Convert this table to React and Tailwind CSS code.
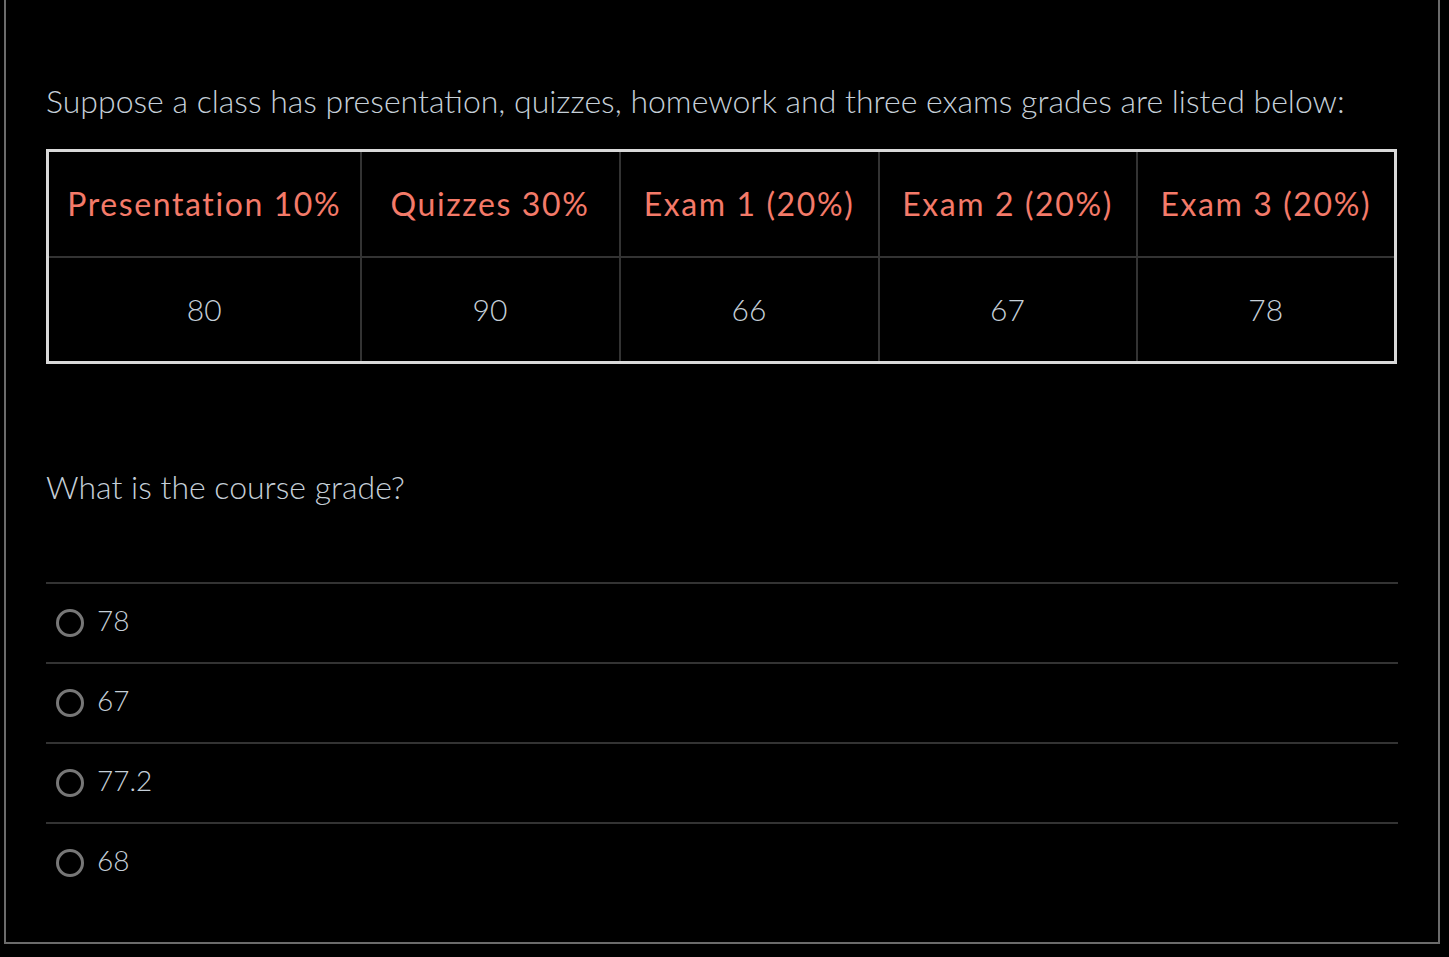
import { useState } from 'react';

const headers = ["Presentation 10%", "Quizzes 30%", "Exam 1 (20%)", "Exam 2 (20%)", "Exam 3 (20%)"];
const scores = ["80", "90", "66", "67", "78"];
const options = ["78", "67", "77.2", "68"];

export default function App() {
  const [picked, setPicked] = useState(null);

  return (
    <div className="min-h-screen bg-black" style={{ fontFamily: "Lato, 'Open Sans', sans-serif" }}>
      <div className="ml-[4px] w-[1436px] h-[944px] border-l-2 border-r-2 border-b-2 border-[#6b6b6b] pl-[40px] pr-[40px] pt-[77px]">
        {/* question text */}
        <p className="text-[32px] leading-[48px] font-light text-[#c5cfd8]">
          Suppose a class has presentation, quizzes, homework and three exams grades are listed below:
        </p>

        <table className="mt-[24px] w-[1348px] table-fixed border-collapse border-[3px] border-[#d9d9d9]">
          <colgroup>
            <col className="w-[313px]" />
            <col className="w-[259px]" />
            <col className="w-[259px]" />
            <col className="w-[258px]" />
            <col className="w-[259px]" />
          </colgroup>
          <thead>
            <tr className="h-[106px]">
              {headers.map((h, i) => (
                <th key={i} className="border-2 border-[#333] px-[4px] text-[32px] tracking-[0.05em] font-normal text-[#f47a69] whitespace-nowrap">
                  {h}
                </th>
              ))}
            </tr>
          </thead>
          <tbody>
            <tr className="h-[106px]">
              {scores.map((s, i) => (
                <td key={i} className="border-2 border-[#333] text-center text-[30px] font-light text-[#c5cfd8]">
                  {s}
                </td>
              ))}
            </tr>
          </tbody>
        </table>

        <p className="mt-[99px] text-[32px] leading-[48px] font-light text-[#c5cfd8]">
          What is the course grade?
        </p>

        {/* answers */}
        <div className="mt-[71px] w-[1352px]">
          {options.map((o, i) => (
            <label key={i} className="flex h-[80px] items-center gap-[13px] border-t-2 border-[#333] pl-[10px] cursor-pointer" onClick={() => setPicked(i)}>
              <span className="flex h-[28px] w-[28px] items-center justify-center rounded-full border-[3px] border-[#777]">
                {picked === i && <span className="h-[12px] w-[12px] rounded-full bg-[#c5cfd8]" />}
              </span>
              <span className="text-[28px] font-light text-[#c5cfd8] -mt-[6px]">{o}</span>
            </label>
          ))}
        </div>
      </div>
    </div>
  );
}
